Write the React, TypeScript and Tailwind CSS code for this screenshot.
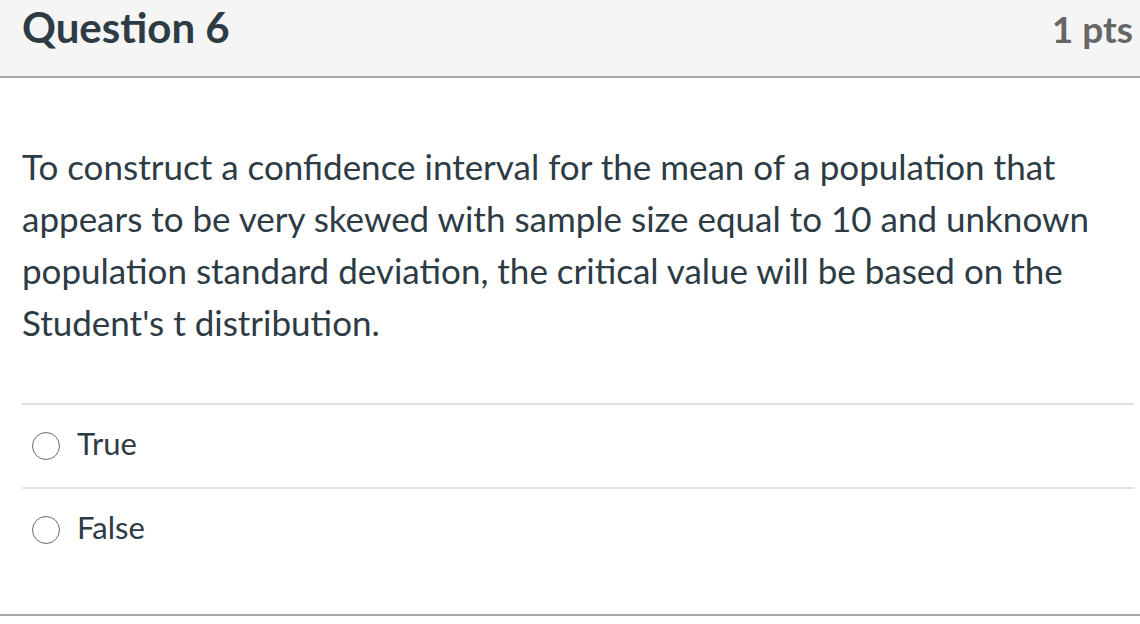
import React from "react";

function Radio() {
  return (
    <span className="inline-block w-[28px] h-[28px] rounded-full border-[1.5px] border-[#6b6b6b] bg-white shrink-0" />
  );
}

export default function App() {
  return (
    <div className="w-[1140px] h-[624px] bg-white overflow-hidden" style={{ fontFamily: "Lato, 'Liberation Sans', sans-serif" }}>
      <div className="h-[78px] bg-[#f5f5f5] border-b-2 border-[#a5a5a5] flex items-baseline justify-between pl-[22px] pr-[7px] pt-[6px]">
        <div className="text-[42px] font-bold text-[#2d3b45] leading-none">Question 6</div>
        <div className="text-[37px] font-bold text-[#666666] leading-none">1 pts</div>
      </div>
      <div className="pl-[22px] pr-[6px]">
        <div className="pt-[62px] pb-[55px] text-[35px] leading-[52px] text-[#2d3b45]">
          To construct a confidence interval for the mean of a population that appears to be very skewed with sample size equal to 10 and unknown population standard deviation, the critical value will be based on the Student's t distribution.
        </div>
        <div className="border-t-2 border-[#e0e0e0]">
          <div className="h-[84px] flex items-center gap-[17px] pl-[10px] border-b-2 border-[#e0e0e0]">
            <Radio />
            <span className="text-[31px] leading-none text-[#2d3b45] mb-[6px]">True</span>
          </div>
          <div className="h-[82px] flex items-center gap-[17px] pl-[10px]">
            <Radio />
            <span className="text-[31px] leading-none text-[#2d3b45] mb-[6px]">False</span>
          </div>
        </div>
      </div>
      <div className="mt-[43px] border-t-2 border-[#a5a5a5]" />
    </div>
  );
}
